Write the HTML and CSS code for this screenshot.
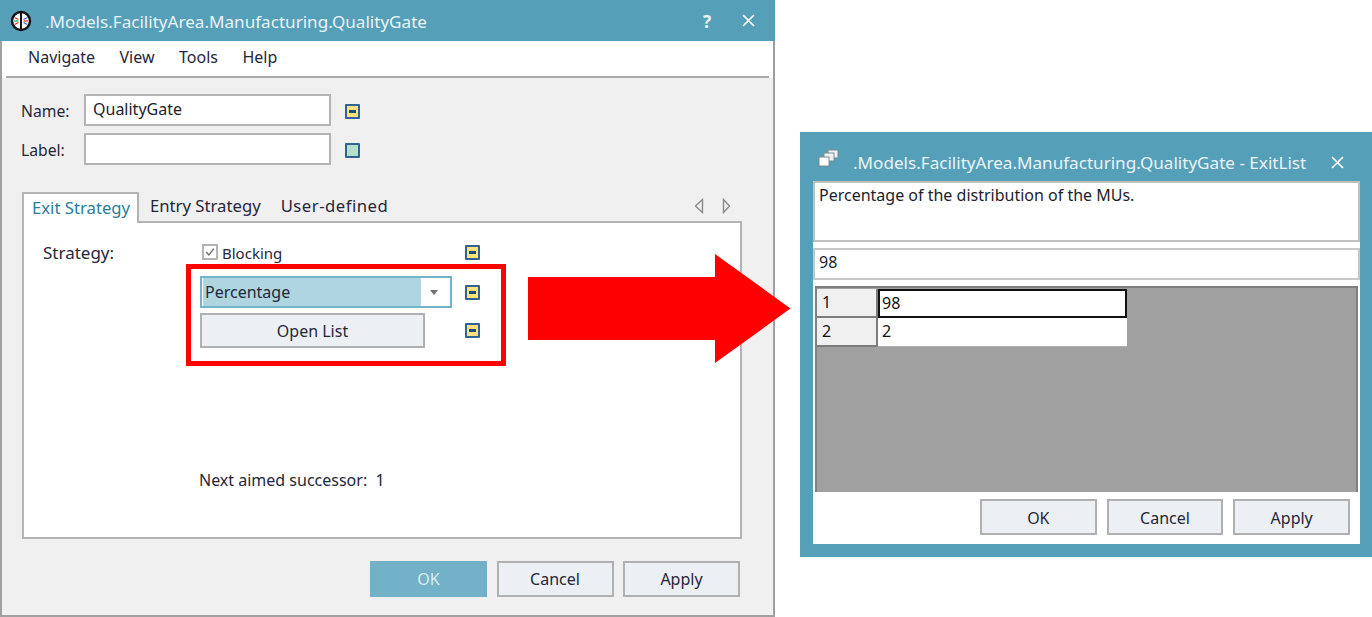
FILE: index.html
```html
<!DOCTYPE html>
<html lang="en">
<head>
<meta charset="utf-8">
<title>QualityGate</title>
<link rel="stylesheet" href="styles.css">
</head>
<body>
<div class="desktop">
  <section class="win main-win">
    <header class="titlebar main-title">
      <svg class="logo" width="22" height="22" viewBox="0 0 22 22">
        <circle cx="11" cy="11" r="9" fill="#fff" stroke="#111" stroke-width="2.4"/>
        <rect x="10" y="3" width="2" height="16" fill="#111"/>
        <path d="M4.5 7.5 8.5 9.5M4.5 14.5 8.5 12.5" stroke="#e5392f" stroke-width="1.3" fill="none"/>
        <path d="M4 11H8.5" stroke="#2fae4f" stroke-width="1.3" fill="none"/>
        <path d="M17.5 7.5 13.5 9.5M17.5 14.5 13.5 12.5" stroke="#2b68d8" stroke-width="1.3" fill="none"/>
        <path d="M18 11H13.5" stroke="#e5392f" stroke-width="1.3" fill="none"/>
      </svg>
      <span class="title-text">.Models.FacilityArea.Manufacturing.QualityGate</span>
      <span class="help">?</span>
      <svg class="close" width="13" height="13" viewBox="0 0 13 13"><path d="M1 1 12 12M12 1 1 12" stroke="#fff" stroke-width="1.7" fill="none"/></svg>
    </header>
    <div class="main-body">
      <nav class="menu">
        <span>Navigate</span><span>View</span><span>Tools</span><span>Help</span>
      </nav>
      <div class="fields">
        <label class="fname">Name:</label>
        <div class="input">QualityGate</div>
        <i class="ind"></i>
        <label class="fname">Label:</label>
        <div class="input"></div>
        <i class="ind ind-empty"></i>
      </div>
      <div class="tabs">
        <span class="tab active">Exit Strategy</span>
        <span class="tab t2">Entry Strategy</span>
        <span class="tab t3">User-defined</span>
        <svg class="tab-nav" width="36" height="16" viewBox="0 0 36 16">
          <path d="M8.5 1.5V14.5L1.5 8Z" fill="none" stroke="#8a8a8a" stroke-width="1.4"/>
          <path d="M29.5 1.5V14.5L35.5 8Z" fill="none" stroke="#8a8a8a" stroke-width="1.4"/>
        </svg>
      </div>
      <div class="pane">
        <div class="pane-grid">
          <span class="strategy">Strategy:</span>
          <div class="check-row">
            <span class="checkbox"><svg width="14" height="14" viewBox="0 0 14 14"><path d="M2.5 7 5.7 10.5 11.5 3" fill="none" stroke="#6e6e6e" stroke-width="1.6"/></svg></span>
            <span class="check-text">Blocking</span>
          </div>
          <i class="ind ind-first"></i>
          <span></span>
          <div class="combo">
            <span class="combo-val">Percentage</span>
            <span class="caret"></span>
          </div>
          <i class="ind"></i>
          <span></span>
          <button class="btn open-list" type="button">Open List</button>
          <i class="ind"></i>
        </div>
        <div class="next">Next aimed successor:&nbsp; 1</div>
      </div>
      <div class="actions main-actions">
        <button class="btn primary" type="button">OK</button>
        <button class="btn" type="button">Cancel</button>
        <button class="btn" type="button">Apply</button>
      </div>
    </div>
  </section>

  <section class="win list-win">
    <header class="titlebar list-title">
      <svg class="stack" width="22" height="20" viewBox="0 0 22 20">
        <rect x="10" y="1" width="10" height="8" fill="#eef4f6" stroke="#7a8a90"/>
        <rect x="6" y="4" width="10" height="8" fill="#eef4f6" stroke="#7a8a90"/>
        <rect x="1" y="8" width="10" height="9" fill="#fff" stroke="#7a8a90"/>
      </svg>
      <span class="title-text">.Models.FacilityArea.Manufacturing.QualityGate - ExitList</span>
      <svg class="close" width="13" height="13" viewBox="0 0 13 13"><path d="M1 1 12 12M12 1 1 12" stroke="#fff" stroke-width="1.7" fill="none"/></svg>
    </header>
    <div class="list-body">
      <div class="desc">Percentage of the distribution of the MUs.</div>
      <div class="value">98</div>
      <div class="table-area">
        <div class="row">
          <span class="rowhead">1</span><span class="cell current">98</span>
        </div>
        <div class="row">
          <span class="rowhead">2</span><span class="cell">2</span>
        </div>
      </div>
      <div class="actions list-actions">
        <button class="btn" type="button">OK</button>
        <button class="btn" type="button">Cancel</button>
        <button class="btn" type="button">Apply</button>
      </div>
    </div>
  </section>

  <div class="highlight"></div>
  <svg class="arrow" width="263" height="110" viewBox="0 0 263 110">
    <path d="M0 23H187V0L262.5 54.5 187 109V86H0Z" fill="#ff0000"/>
  </svg>
</div>
</body>
</html>
```
FILE: styles.css
```css
* { box-sizing: border-box; }
html, body { margin: 0; padding: 0; background: #fff; }
body {
  font-family: "Noto Sans", "Open Sans", sans-serif;
  font-size: 16px;
  color: #26263a;
}
.desktop { position: relative; width: 1372px; height: 617px; overflow: hidden; background: #fff; }

.win { position: absolute; display: flex; flex-direction: column; }
.main-win { left: 0; top: 0; width: 775px; height: 617px; }
.list-win { left: 800px; top: 132px; width: 572px; height: 425px; background: #559fb9; padding: 0 12px 13px 13px; }

.titlebar { display: flex; align-items: center; color: #e9f4f7; font-size: 17.1px; flex: none; }
.main-title { height: 41px; background: #559fb9; padding: 2px 20px 0 10px; }
.main-title .title-text { margin-left: 13px; flex: 1; }
.main-title .logo { margin-top: -2px; }
.main-title .close { margin-top: -2px; }
.list-title { height: 49px; padding: 11px 16px 0 5px; }
.list-title .title-text { margin-left: 13px; flex: 1; }
.list-title .stack { margin-top: -7px; }
.help { font-weight: 700; color: #e9f4f7; margin-right: 31px; font-size: 17px; }
.close { display: block; }

.main-body { flex: 1; display: flex; flex-direction: column; background: #f0f0f0; border: solid #a0a0a0; border-width: 0 2px 2px 2px; }
.menu { height: 37px; margin: 0 4px; padding: 0 0 4px 22px; display: flex; align-items: center; gap: 24.5px; background: #fff; border-bottom: 2px solid #a9a9a9; box-shadow: -4px 0 0 #fff, 4px 0 0 #fff; }

.fields { display: grid; grid-template-columns: 63px 247px 14px; row-gap: 7px; margin: 16px 0 0 19px; align-items: center; width: 340px; }
.fname { display: block; padding-top: 2px; font-size: 15.7px; }
.input { height: 32px; border: 2px solid #b4b4b4; background: #fff; padding-left: 7px; line-height: 26px; color: #1d1d2b; }
.fields .ind { margin: 2px 0 0 14px; }

.ind { display: block; position: relative; width: 15px; height: 15px; background: #ffe27a; border: 2px solid #2e6595; border-radius: 1px; }
.ind::after { content: ""; position: absolute; left: 2px; right: 2px; top: 4px; height: 3px; background: #1b4c80; }
.ind-empty { background: #b3dfcd; }
.ind-empty::after { display: none; }

.tabs { display: flex; align-items: flex-end; position: relative; height: 29px; margin: 27px 0 0 20px; font-size: 16.7px; }
.tab { display: block; padding: 0 10px; line-height: 26px; }
.tab.active { width: 117px; height: 31px; margin-bottom: -2px; background: #fff; border: 2px solid #b4b4b4; border-bottom: 0; color: #2a7d9c; padding: 1px 0 0 8px; position: relative; z-index: 1; white-space: nowrap; }
.tab.t2 { margin-left: 1px; position: relative; top: -2px; }
.tab.t3 { position: relative; top: -2px; letter-spacing: 0.5px; }
.tab-nav { position: absolute; right: 43.5px; top: 6px; }

.pane { height: 318px; margin: 0 31px 0 20px; background: #fff; border: 2px solid #b4b4b4; padding: 0 0 0 19px; }
.pane-grid { display: grid; grid-template-columns: 157px 265px 15px; grid-template-rows: 34px 32px 35px; row-gap: 5px; align-items: center; margin-top: 14px; }
.pane-grid .ind { margin-left: 0; }
.ind-first { align-self: start; margin-top: 8px; }
.strategy { align-self: start; line-height: 30px; padding-top: 1px; font-size: 17px; }
.check-row { display: flex; align-items: center; align-self: start; gap: 4px; padding-left: 2px; height: 30px; font-size: 15px; }
.check-text { padding-top: 1px; }
.checkbox { display: flex; align-items: center; justify-content: center; width: 16px; height: 16px; border: 2px solid #b4b4b4; background: #fff; }
.combo { display: flex; align-items: center; width: 252px; height: 32px; border: 2px solid #74b2c8; background: #fff; padding: 1px; }
.combo-val { display: block; width: 218px; height: 28px; line-height: 28px; background: #afd6e0; padding-left: 2px; }
.caret { display: block; margin-left: 9px; width: 0; height: 0; border-left: 4.5px solid transparent; border-right: 4.5px solid transparent; border-top: 5px solid #707070; }
.open-list { width: 225px; height: 35px; padding-right: 3px; }
.next { margin-top: 121px; margin-left: 156px; }

.btn { display: block; margin: 0; padding: 0; font: inherit; color: #26263a; background: #ecf0f5; border: 2px solid #b0b0b0; }
.primary { background: #72b1c7; border-color: #72b1c7; color: #d9edf3; }
.actions { display: flex; }
.actions .btn { width: 117px; height: 36px; }
.main-actions { gap: 9.5px; margin: 22px 32px 0 368px; }
.list-body { flex: 1; background: #fff; display: flex; flex-direction: column; }
.desc { height: 61px; border: 2px solid #c0c0c0; padding: 0 0 0 4px; line-height: 25px; color: #1d1d2b; }
.value { height: 32px; margin-top: 6px; border: 2px solid #c8c8c8; padding-left: 4px; line-height: 24px; color: #1d1d2b; }
.table-area { height: 206px; margin: 6px 2px 0 2px; background: #a0a0a0; border: 2px solid #808080; border-bottom: 0; padding-top: 1px; }
.row { display: flex; height: 29px; }
.rowhead { width: 61px; background: #f0f0f0; border-right: 2px solid #7c7c7c; border-bottom: 2px solid #7c7c7c; padding-left: 5px; line-height: 26px; color: #111; }
.cell { width: 249px; background: #fff; padding-left: 4px; line-height: 27px; color: #111; border-bottom: 1px solid #b0b0b0; }
.cell.current { border: 2px solid #111; padding-left: 2px; line-height: 24px; }
.list-actions { gap: 10px; margin: 7px 10px 0 167px; }
.list-actions .btn { padding-top: 1px; }

.highlight { position: absolute; left: 186px; top: 264px; width: 320px; height: 102px; border: 5px solid #ff0000; }
.arrow { position: absolute; left: 528px; top: 254px; }
```
